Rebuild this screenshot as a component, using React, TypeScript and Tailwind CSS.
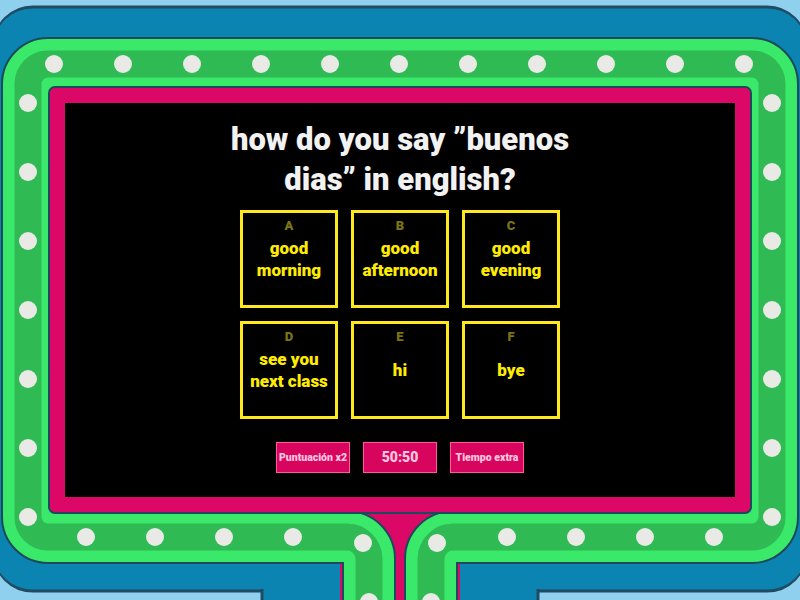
const answers = [
  { key: 'A', text: 'good morning' },
  { key: 'B', text: 'good afternoon' },
  { key: 'C', text: 'good evening' },
  { key: 'D', text: 'see you next class' },
  { key: 'E', text: 'hi' },
  { key: 'F', text: 'bye' },
];

// centre line of the studded band, split into the two stems at the bottom
const band =
  'M 369 620 L 369 559 A 22 22 0 0 0 347 537 L 48 537 A 20 20 0 0 1 28 517 L 28 84 A 20 20 0 0 1 48 64 ' +
  'L 752 64 A 20 20 0 0 1 772 84 L 772 517 A 20 20 0 0 1 752 537 L 453 537 A 22 22 0 0 0 431 559 L 431 620';

const dots: [number, number][] = [
  ...Array.from({ length: 11 }, (_, i) => [54 + 69 * i, 64] as [number, number]),
  ...Array.from({ length: 7 }, (_, i) => [28, 103 + 69 * i] as [number, number]),
  ...Array.from({ length: 7 }, (_, i) => [772, 103 + 69 * i] as [number, number]),
  [86, 537], [155, 537], [224, 537], [293, 537], [363, 543], [369, 602],
  [714, 537], [645, 537], [576, 537], [507, 537], [437, 543], [431, 602],
];

function Frame() {
  return (
    <svg className="absolute inset-0" width="800" height="600" viewBox="0 0 800 600">
      <rect x="-6" y="7" width="812" height="584" rx="39" fill="#0c84b1" stroke="#214b63" strokeWidth="3" />
      <rect x="262" y="585" width="276" height="30" fill="#0c84b1" stroke="#214b63" strokeWidth="3" />
      <rect x="-6" y="9" width="812" height="580" rx="37" fill="#0c84b1" />
      <rect x="40" y="78" width="720" height="444" fill="#3ae86a" />
      <rect x="340" y="505" width="120" height="110" fill="#dc0868" />
      <path d={band} fill="none" stroke="#1d4a5a" strokeWidth="54" />
      <path d={band} fill="none" stroke="#3ae86a" strokeWidth="50" />
      <path d={band} fill="none" stroke="#2fba54" strokeWidth="27" />
      {dots.map(([cx, cy], i) => (
        <circle key={i} cx={cx} cy={cy} r="9" fill="#e9e9e6" />
      ))}
    </svg>
  );
}

export default function App() {
  return (
    <div className="relative w-[800px] h-[600px] overflow-hidden bg-[#8fd0ef] font-['Roboto',sans-serif]">
      <Frame />
      <div className="relative pt-[88px] px-[50px]">
        <div className="h-[424px] border-[15px] border-[#dc0868] rounded-[5px] bg-black shadow-[0_0_0_2px_#1d4a5a] flex flex-col items-center">
          <h1 className="mt-[17px] w-[372px] shrink-0 text-center text-[31px] leading-[40px] font-black text-[#f2f2f2]">
            how do you say ”buenos dias” in english?
          </h1>
          <div className="mt-[10px] grid grid-cols-3 gap-[13px] w-[320px]">
            {answers.map((a) => (
              <div
                key={a.key}
                className="relative h-[98px] border-[3px] border-[#ffe81c] flex items-center justify-center"
              >
                <span className="absolute top-[6px] left-0 right-0 text-center text-[13px] leading-[14px] font-black text-[#7d760f]">
                  {a.key}
                </span>
                <span className="w-[92px] shrink-0 text-center text-[17px] leading-[22px] font-black text-[#ffec00]">
                  {a.text}
                </span>
              </div>
            ))}
          </div>
          <div className="mt-[23px] flex gap-[13px]">
            <button className="w-[74px] h-[31px] bg-[#d8055f] border border-[#ff5aa0] text-[10.5px] font-black text-[#ffc6df] whitespace-nowrap">
              Puntuación x2
            </button>
            <button className="w-[74px] h-[31px] bg-[#d8055f] border border-[#ff5aa0] text-[14px] font-black text-[#ffc6df]">
              50:50
            </button>
            <button className="w-[74px] h-[31px] bg-[#d8055f] border border-[#ff5aa0] text-[10.5px] font-black text-[#ffc6df] whitespace-nowrap">
              Tiempo extra
            </button>
          </div>
        </div>
      </div>
    </div>
  );
}
